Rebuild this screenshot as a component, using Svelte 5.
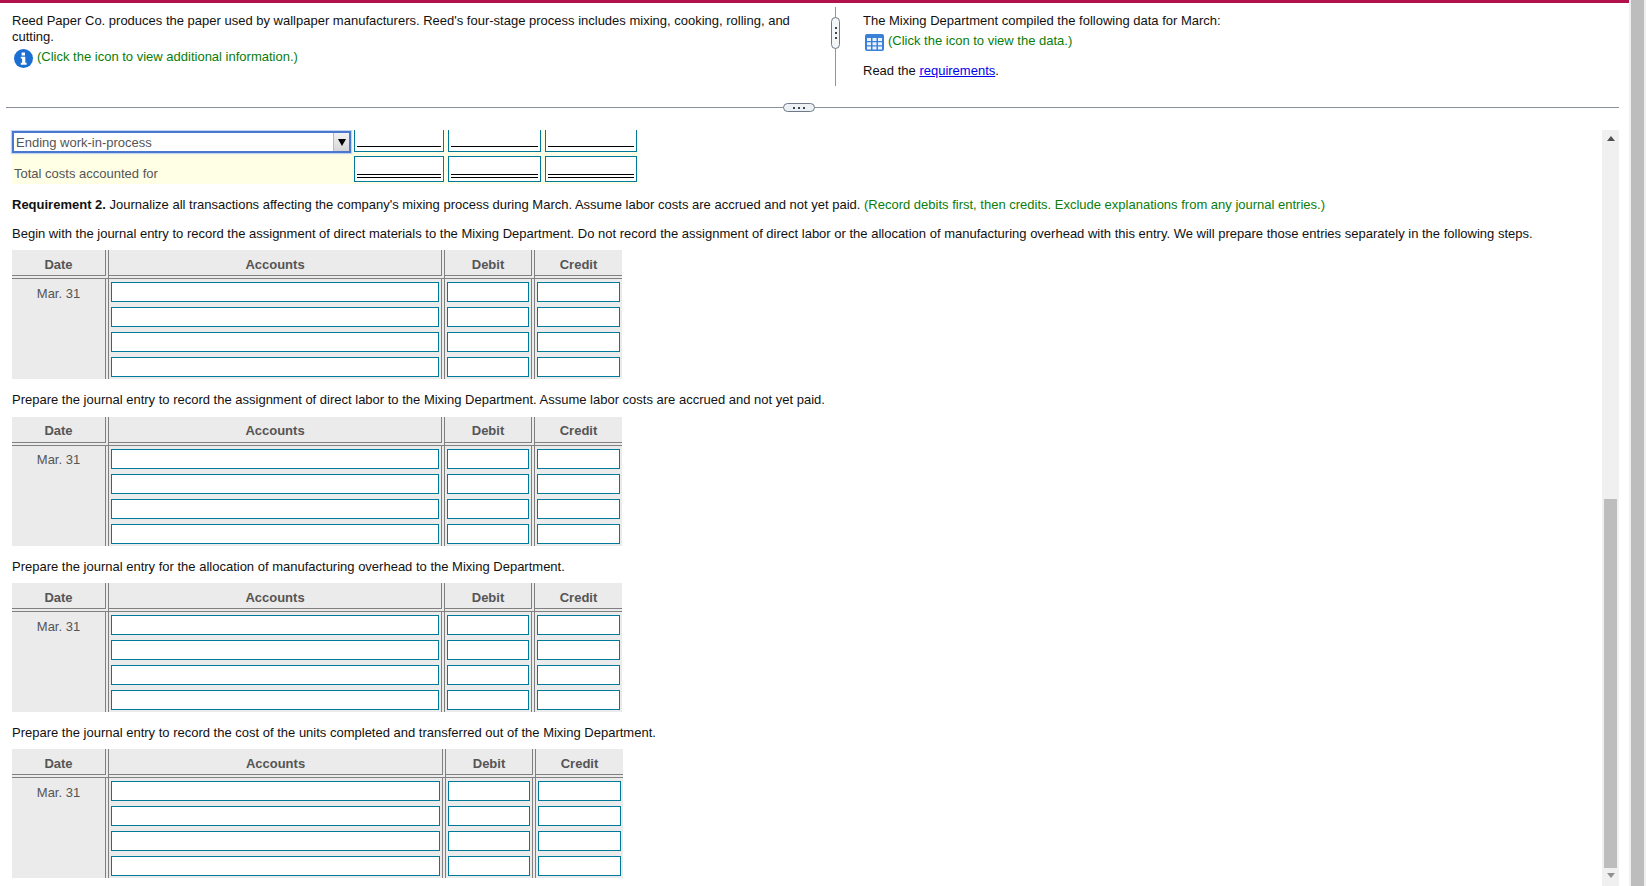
<script>
  const sections = [
    { cls: 's1', text: null },
    { cls: 's2', text: 'Prepare the journal entry to record the assignment of direct labor to the Mixing Department. Assume labor costs are accrued and not yet paid.' },
    { cls: 's3', text: 'Prepare the journal entry for the allocation of manufacturing overhead to the Mixing Department.' },
    { cls: 's4', text: 'Prepare the journal entry to record the cost of the units completed and transferred out of the Mixing Department.' }
  ];
  const rows = [0, 1, 2, 3];
</script>

<div class="page">
  <div class="main">
    <div class="topbar"></div>
    <div class="top">
      <div class="left">
        <p class="intro">Reed Paper Co. produces the paper used by wallpaper manufacturers. Reed's four-stage process includes mixing, cooking, rolling, and cutting.</p>
        <div class="hint info">
          <svg width="19" height="19" viewBox="0 0 19 19"><circle cx="9.5" cy="9.5" r="9.5" fill="#1c6fd2"/><path d="M7.6 3.4h3.4v3h-3.4zM6.8 7.7h4.5v6.1h1.3v1.9H6.8v-1.9h1.3V9.6H6.8z" fill="#fff"/></svg>
          <span class="green">(Click the icon to view additional information.)</span>
        </div>
      </div>
      <div class="vsplit"><span class="vhandle"><i></i><i></i><i></i></span></div>
      <div class="right">
        <p class="data">The Mixing Department compiled the following data for March:</p>
        <div class="hint tableicon">
          <svg width="19" height="17" viewBox="0 0 19 17"><rect width="19" height="17" rx="2" fill="#3a80d6"/><path d="M2 4h4v3H2zM7.5 4h4v3h-4zM13 4h4v3h-4zM2 8.2h4v3H2zM7.5 8.2h4v3h-4zM13 8.2h4v3h-4zM2 12.4h4v3H2zM7.5 12.4h4v3h-4zM13 12.4h4v3h-4z" fill="#eaf3fd"/></svg>
          <span class="green">(Click the icon to view the data.)</span>
        </div>
        <p class="read">Read the <a href="#req">requirements</a>.</p>
      </div>
    </div>
    <div class="hsplit"><span class="hhandle"><i></i><i></i><i></i></span></div>
    <div class="lower">
      <div class="content">
        <div class="totals">
          <div class="select"><span>Ending work-in-process</span><b><em></em></b></div>
          <div class="box cut first"><u></u></div>
          <div class="box cut"><u></u></div>
          <div class="box cut third"><u></u></div>
          <div class="label">Total costs accounted for</div>
          <div class="box dbl first"><u></u><u></u></div>
          <div class="box dbl"><u></u><u></u></div>
          <div class="box dbl third"><u></u><u></u></div>
        </div>
        <p class="req"><strong>Requirement 2.</strong> Journalize all transactions affecting the company's mixing process during March. Assume labor costs are accrued and not yet paid. <span class="green">(Record debits first, then credits. Exclude explanations from any journal entries.)</span></p>
        {#each sections as s}
          <section class={s.cls}>
            {#if s.text}
              <p class="para">{s.text}</p>
            {:else}
              <p class="para">Begin with the journal entry to record the assignment of direct materials to the Mixing Department. Do not record the assignment of direct labor or the allocation of manufacturing overhead with this entry. We will prepare those entries separately in the following steps.</p>
            {/if}
            <div class="tbl">
              <div class="th">Date</div>
              <div class="th">Accounts</div>
              <div class="th">Debit</div>
              <div class="th last">Credit</div>
              <div class="date">Mar. 31</div>
              {#each rows as r}
                <div class="cell"><input type="text" aria-label="Account {r + 1}" /></div>
                <div class="cell"><input type="text" aria-label="Debit {r + 1}" /></div>
                <div class="cell last"><input type="text" aria-label="Credit {r + 1}" /></div>
              {/each}
            </div>
          </section>
        {/each}
      </div>
      <div class="innerbar">
        <span class="up"></span>
        <div class="gap"></div>
        <div class="thumb"></div>
        <span class="down"></span>
      </div>
    </div>
  </div>
  <div class="outerbar"><div></div></div>
</div>

<style>
  :global(body) { margin: 0; background: #fff; }
  * { box-sizing: border-box; }
  .page {
    width: 1646px; height: 886px; display: flex; overflow: hidden;
    font: 13px/16px "Liberation Sans", Arial, sans-serif; color: #111;
  }
  p { margin: 0; }
  .main { width: 1629px; flex: none; display: flex; flex-direction: column; }
  .topbar { height: 3px; background: #b2124c; flex: none; margin-right: -1px; }
  .top { height: 103px; flex: none; display: flex; }
  .left { width: 835px; padding: 10px 0 0 12px; flex: none; }
  .intro { width: 795px; }
  .hint { display: flex; align-items: center; }
  .hint .green { padding-bottom: 3px; }
  .info { margin: 4px 0 0 2px; gap: 4px; height: 19px; }
  .green { color: #0a7d0a; }
  .vsplit { position: relative; width: 1px; height: 79px; margin-top: 4px; background: #8c97a5; flex: none; }
  .vhandle {
    position: absolute; left: -4px; top: 10px; width: 9px; height: 32px;
    border: 1px solid #6f7a88; border-radius: 5px; background: #f3f5f7;
    display: flex; flex-direction: column; align-items: center; justify-content: center; gap: 3px;
  }
  .vhandle i, .hhandle i { width: 2px; height: 2px; background: #3d4652; display: block; }
  .right { padding: 10px 0 0 27px; flex: 1; }
  .tableicon { margin: 5px 0 0 2px; gap: 4px; height: 17px; }
  .read { margin-top: 12px; }
  a { color: #0000ee; }
  .hsplit { position: relative; height: 1px; background: #8a9199; margin: 1px 10px 0 6px; flex: none; }
  .hhandle {
    position: absolute; left: 777px; top: -4px; width: 32px; height: 9px;
    border: 1px solid #6f7a88; border-radius: 5px; background: #eef1f4;
    display: flex; align-items: center; justify-content: center; gap: 3px;
  }
  .lower { flex: 1; min-height: 0; display: flex; margin-top: 22px; margin-right: 10px; }
  .content { flex: 1; min-width: 0; overflow: hidden; padding-left: 12px; }
  .totals {
    width: 626px; background: #ffffe6; display: grid;
    grid-template-columns: 342px 94px 97px 92px; grid-template-rows: 26px 28px; padding-right: 1px;
  }
  .select {
    width: 339px; height: 22px; margin-top: 1px; border: 2px solid #4a78cf; background: #fff; display: flex;
    justify-content: space-between; color: #555; box-shadow: 0 0 1px 1px #c3d3f2; padding-left: 2px; line-height: 20px;
  }
  .select b { width: 16px; background: linear-gradient(#f2f2f2, #d6d6d6); display: flex; align-items: center; justify-content: center; border-left: 1px solid #bbb; }
  .select em { border: 4px solid transparent; border-top: 7px solid #000; border-bottom: 0; }
  .box { width: 93px; border: 1px solid #007a9a; background: #fff; position: relative; }
  .box.first { width: 90px; }
  .box.third { width: 92px; }
  .box u { position: absolute; left: 2px; right: 2px; height: 1px; background: #000; }
  .cut { height: 22px; border-top: 0; }
  .cut u { bottom: 4px; }
  .dbl { height: 26px; }
  .dbl u:first-child { bottom: 6px; }
  .dbl u:last-child { bottom: 3px; }
  .label { color: #555; padding: 10px 0 0 2px; }
  .req { margin-top: 13px; }
  .para { margin-top: 13px; }
  .tbl {
    margin-top: 8px; width: 610px; background: #ebebeb; display: grid;
    grid-template-columns: 97px 336px 90px 87px;
  }
  .s2 .tbl { margin-top: 9px; }
  .s4 .tbl { width: 611px; grid-template-columns: 97px 337px 90px 87px; }
  .th {
    height: 29px; border-right: 4px double #808080; border-bottom: 4px double #808080;
    text-align: center; font-weight: bold; color: #555; line-height: 25px; padding-top: 2px;
  }
  .s2 .th { padding-top: 1px; }
  .th.last, .cell.last { border-right: 0; }
  .date { grid-row: span 4; border-right: 4px double #808080; text-align: center; color: #555; padding-top: 7px; }
  .s2 .date { padding-top: 6px; }
  .cell { height: 25px; padding: 3px 2px 2px; border-right: 4px double #808080; }
  .cell input { display: block; width: 100%; height: 20px; border: 1px solid #007a9a; background: #fff; border-radius: 0; padding: 0; outline: 0; }
  .innerbar { width: 17px; flex: none; background: #f0f0f0; display: flex; flex-direction: column; align-items: center; }
  .up { border: 4px solid transparent; border-bottom: 5px solid #505050; border-top: 0; margin-top: 6px; }
  .gap { height: 358px; flex: none; }
  .thumb { width: 13px; height: 369px; background: #bdbdbd; flex: none; }
  .down { border: 4px solid transparent; border-top: 5px solid #909090; border-bottom: 0; margin-top: 5px; }
  .outerbar { width: 17px; background: #f0f0f0; padding: 0 2px; flex: none; }
  .outerbar div { height: 100%; background: #bdbdbd; }
</style>
